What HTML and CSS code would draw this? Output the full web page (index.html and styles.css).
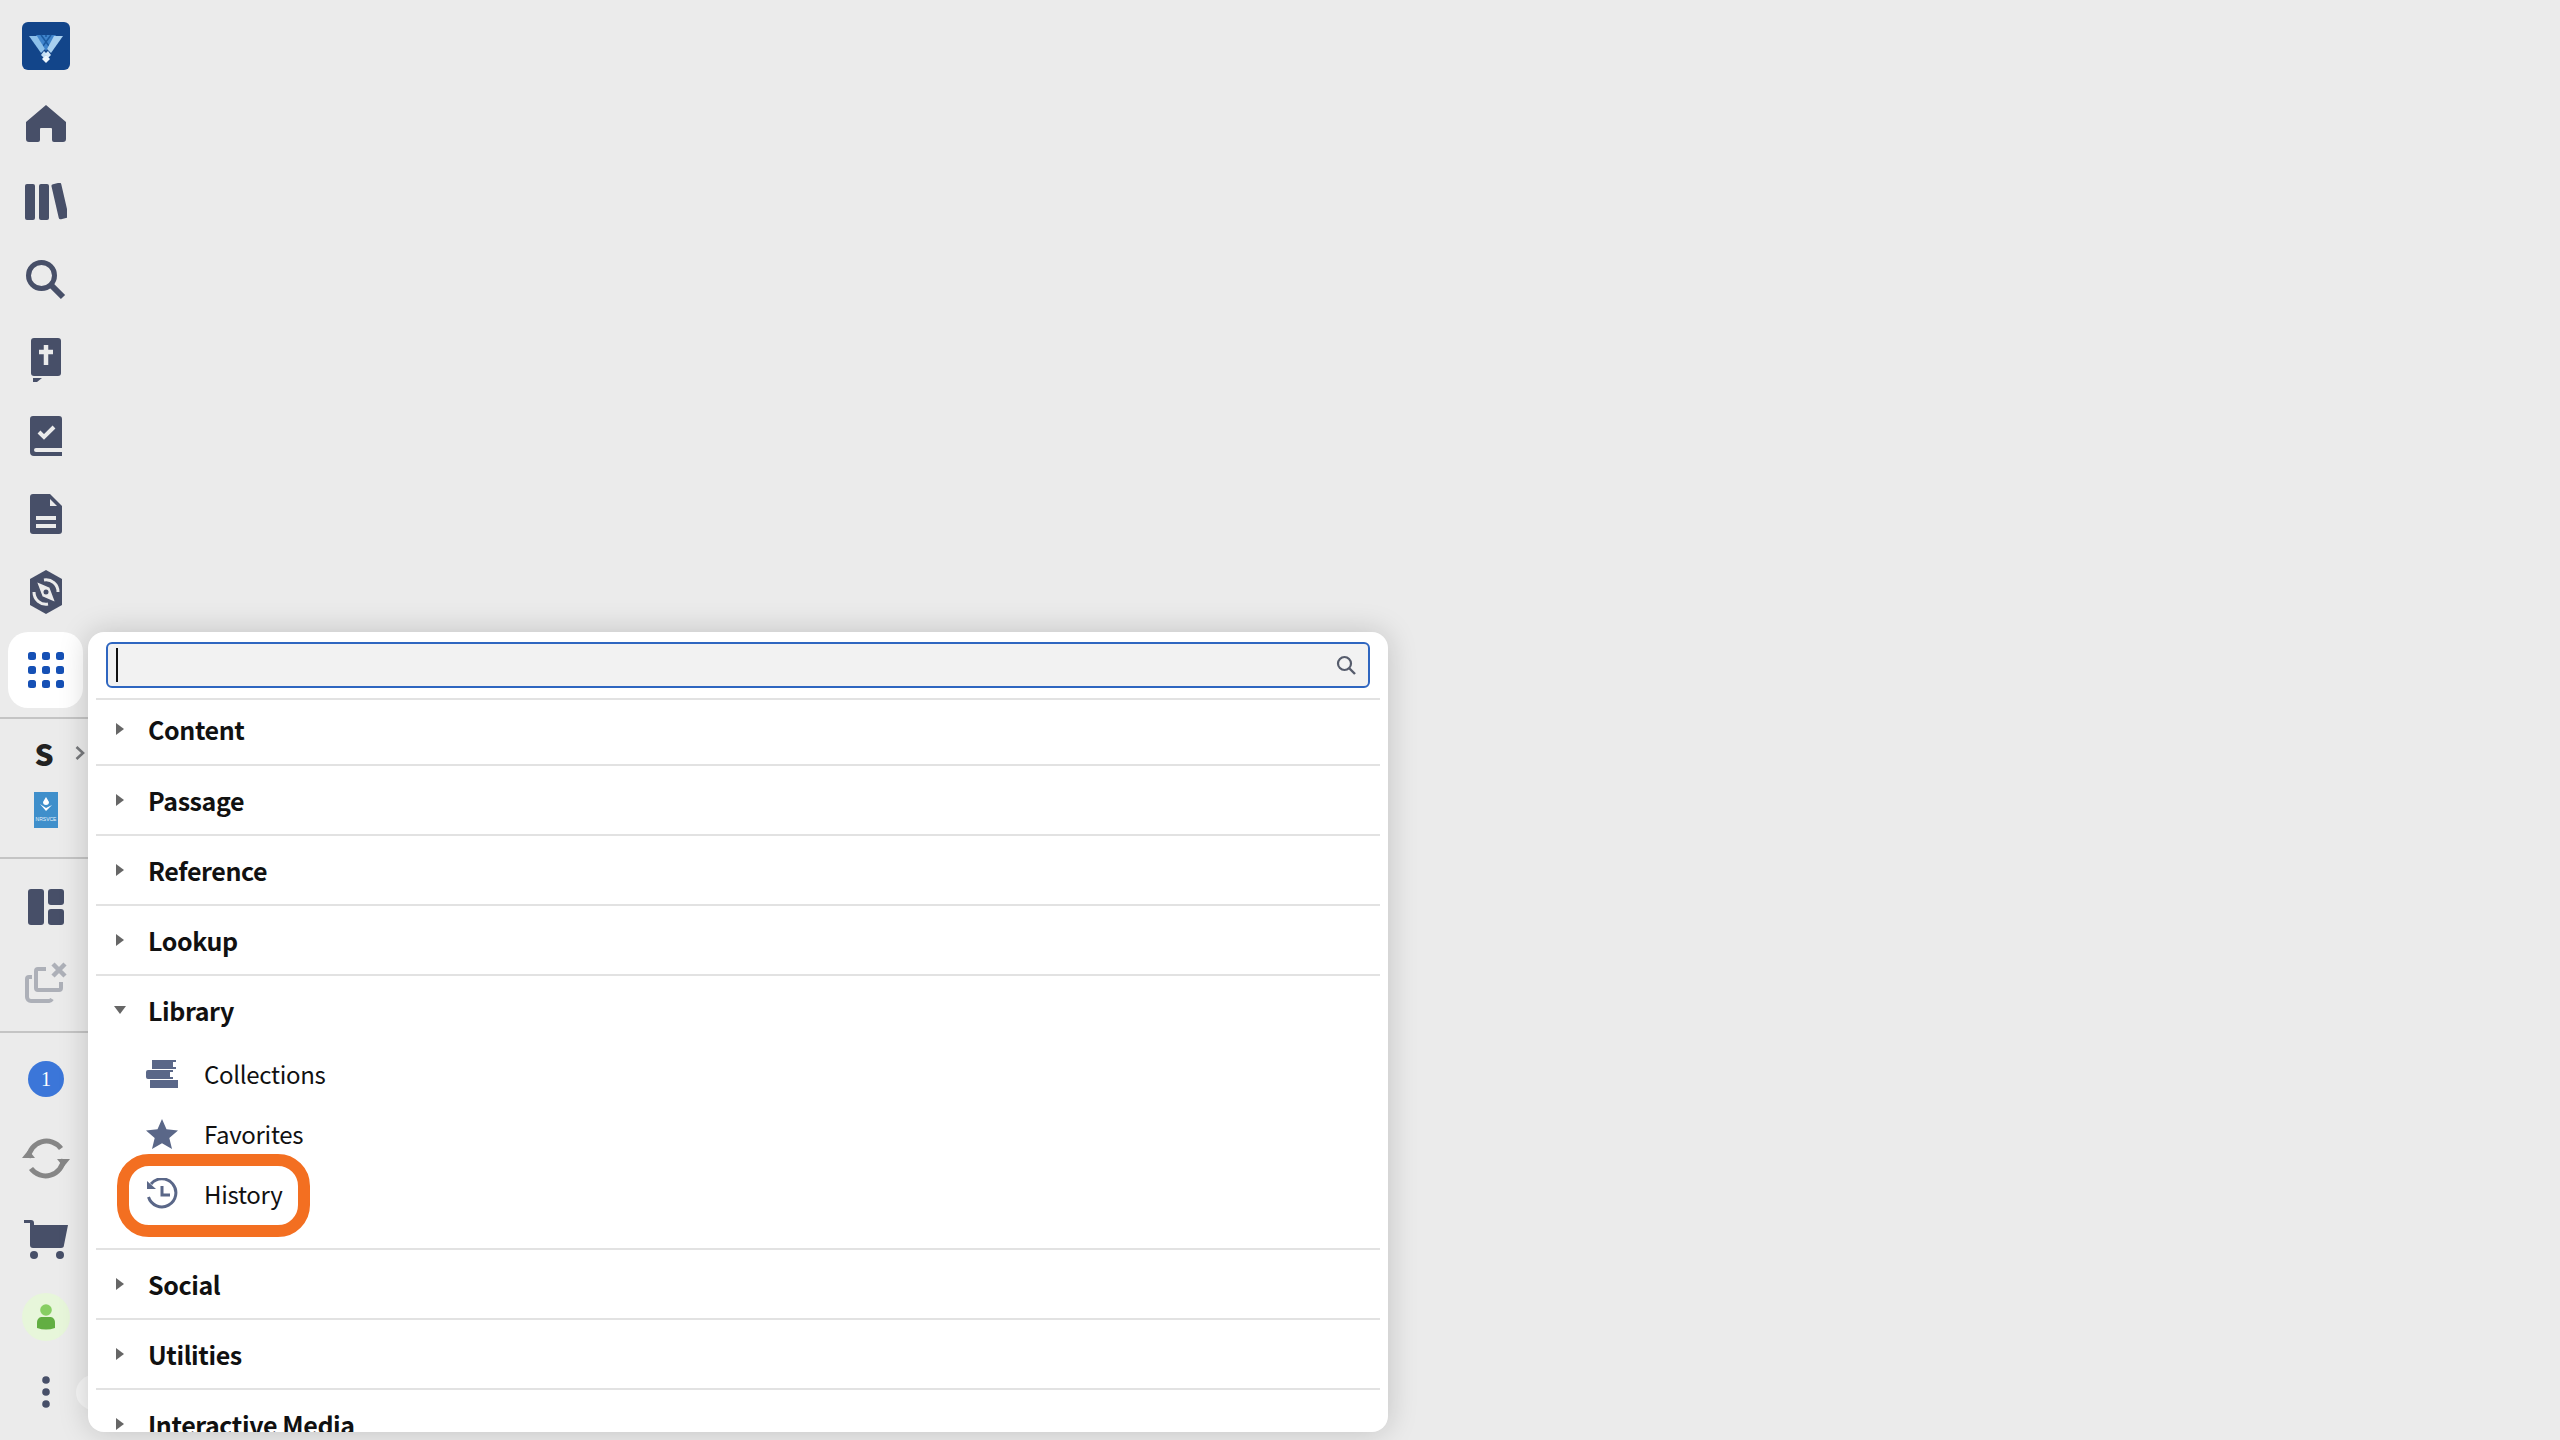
FILE: index.html
```html
<!DOCTYPE html>
<html lang="en">
<head>
<meta charset="utf-8">
<title>Tools</title>
<link rel="stylesheet" href="styles.css">
</head>
<body>
<aside class="sidebar">
  <div class="item"><svg class="ic" width="48" height="48" viewBox="0 0 48 48"><rect width="48" height="48" rx="6" fill="#12458a"/><polygon points="14,13 34,13 24,29" fill="#3f84cc"/><path d="M19 13 L27 24 M29 13 L21 24 M24 13 L24 15" stroke="#1c5aa0" stroke-width="1.500"/><polygon points="7,14 15,14 23,27 19,31" fill="#8cc0ea"/><polygon points="41,14 32,14 25,27 29,31" fill="#a8d0f0"/><polygon points="19,33 22,29 25,32 22,36" fill="#c3dff5"/><polygon points="29,33 26,29 23,32 26,36" fill="#d6e9f8"/><polygon points="24,33 28,37 24,41 20,37" fill="#edf6fc"/></svg></div>
  <div class="item"><svg width="40" height="38" viewBox="0 0 40 38"><path class="f" d="M20 0 L40 17 V34 a3 3 0 0 1-3 3 H28 a2 2 0 0 1-2-2 V24 a1 1 0 0 0-1-1 H15 a1 1 0 0 0-1 1 V35 a2 2 0 0 1-2 2 H3 a3 3 0 0 1-3-3 V17 Z"/></svg></div>
  <div class="item"><svg width="42" height="38" viewBox="0 0 42 38"><rect class="f" x="0" y="1" width="10" height="36" rx="2"/><rect class="f" x="14" y="1" width="10" height="36" rx="2"/><rect class="f" x="30" y="0" width="10" height="36" rx="2" transform="rotate(-13 35 18)"/></svg></div>
  <div class="item"><svg width="40" height="40" viewBox="0 0 40 40"><circle cx="15.500" cy="15.500" r="13" fill="none" stroke="#474f68" stroke-width="5"/><path d="M25 25 L37 37" stroke="#474f68" stroke-width="6"/></svg></div>
  <div class="item bible"><svg width="30" height="44" viewBox="0 0 30 44"><path class="f" d="M3 0 H27 a3 3 0 0 1 3 3 V35 a3 3 0 0 1-3 3 H3 a3 3 0 0 1-3-3 V3 a3 3 0 0 1 3-3Z"/><path class="f" d="M2 40 H11 L6 44 H2Z"/><path d="M15 7 V27 M8 14 H22" stroke="#ebebeb" stroke-width="4.500"/></svg></div>
  <div class="item"><svg width="32" height="40" viewBox="0 0 32 40"><path class="f" d="M3 0 H29 a3 3 0 0 1 3 3 V32 H6 a2 2 0 0 0 0 4 H32 V40 H4 a4 4 0 0 1-4-4 V3 a3 3 0 0 1 3-3Z"/><path d="M9 16 L14 21 L24 11" fill="none" stroke="#ebebeb" stroke-width="4"/></svg></div>
  <div class="item"><svg width="32" height="40" viewBox="0 0 32 40"><path class="f" d="M3 0 H20 L32 12 V37 a3 3 0 0 1-3 3 H3 a3 3 0 0 1-3-3 V3 a3 3 0 0 1 3-3Z"/><path d="M20 5 L27 12 H20Z" fill="#ebebeb"/><path d="M6 24 H26 M6 32 H26" stroke="#ebebeb" stroke-width="4"/></svg></div>
  <div class="item"><svg width="32" height="44" viewBox="0 0 32 44"><path class="f" d="M16 0 L32 9 V35 L16 44 L0 35 V9Z"/><path d="M14 10 A12 12 0 0 1 28 22 M4 22 A12 12 0 0 0 18 34" fill="none" stroke="#ebebeb" stroke-width="3"/><path d="M6 11 L20 17 L26 33 L12 27Z" fill="#ebebeb" stroke="#474f68" stroke-width="1.500"/><circle cx="16" cy="22" r="2.500" fill="#474f68"/></svg></div>
  <div class="item tile"><svg width="36" height="36" viewBox="0 0 36 36"><g class="blue"><rect width="8" height="8" rx="2.500"/><rect x="14" width="8" height="8" rx="2.500"/><rect x="28" width="8" height="8" rx="2.500"/><rect y="14" width="8" height="8" rx="2.500"/><rect x="14" y="14" width="8" height="8" rx="2.500"/><rect x="28" y="14" width="8" height="8" rx="2.500"/><rect y="28" width="8" height="8" rx="2.500"/><rect x="14" y="28" width="8" height="8" rx="2.500"/><rect x="28" y="28" width="8" height="8" rx="2.500"/></g></svg></div>
  <hr class="rule first">
  <div class="shortcut"><span class="s">S</span><svg class="chev" width="10" height="14" viewBox="0 0 10 14"><path d="M1.500 1 L8 7 L1.500 13" fill="none" stroke="#77797c" stroke-width="2.600"/></svg></div>
  <div class="book"><svg width="14" height="14" viewBox="0 0 14 14"><path d="M7 0 L10 5 a3 3 0 0 1-6 0Z M1 7 L7 11 L13 8 L7 14Z" fill="#fff"/></svg><span class="booklabel">NRSVCE</span></div>
  <hr class="rule second">
  <div class="item mid"><svg width="36" height="36" viewBox="0 0 36 36"><rect class="f" width="16" height="36" rx="3"/><rect class="f" x="20" width="16" height="16" rx="3"/><rect class="f" x="20" y="20" width="16" height="16" rx="3"/></svg></div>
  <div class="item stack"><svg width="42" height="42" viewBox="0 0 42 42"><g fill="none" stroke="#adb0b8" stroke-width="4"><path d="M21 7 H13 a2 2 0 0 0-2 2 V26 a2 2 0 0 0 2 2 H34 a2 2 0 0 0 2-2 V20"/><path d="M7 15 H4 a2 2 0 0 0-2 2 V35 a4 4 0 0 0 4 4 H24 a4 4 0 0 0 3-2"/><path d="M28 2 L40 14 M40 2 L28 14" stroke-width="4.500"/></g></svg></div>
  <hr class="rule third">
  <div class="item badgerow"><span class="badge">1</span></div>
  <div class="item sync"><svg width="48" height="42" viewBox="0 0 48 42"><g fill="none" stroke="#868686" stroke-width="5"><path d="M6.500 20 A18 18 0 0 1 39 10.500"/><path d="M41.500 21 A18 18 0 0 1 9 30.500"/></g><path d="M0 20 L6.500 12 L13 20Z M48 21 L41.500 29 L35 21Z" fill="#868686"/></svg></div>
  <div class="item cart"><svg width="44" height="40" viewBox="0 0 44 40"><path class="f" d="M0 1 H7 a3 3 0 0 1 3 3 V6 H44 L40 26 a3 3 0 0 1-3 3 H9 a3 3 0 0 1-3-3 V4 H0Z"/><circle class="f" cx="10" cy="36" r="4"/><circle class="f" cx="36" cy="36" r="4"/></svg></div>
  <div class="item prof"><span class="avatar"><svg width="18" height="26" viewBox="0 0 18 26"><circle cx="9" cy="6" r="5.800" fill="#87ce63"/><path d="M0 19 C0 14 3 13 5 13 H13 C15 13 18 14 18 19 V24 Q9 27 0 24Z" fill="#62ae42"/></svg></span></div>
  <div class="item more"><svg width="8" height="32" viewBox="0 0 8 32"><circle class="f" cx="4" cy="4" r="3.800"/><circle class="f" cx="4" cy="16" r="3.800"/><circle class="f" cx="4" cy="28" r="3.800"/></svg></div>
</aside>
<span class="tab"></span>
<section class="panel">
  <div class="searchwrap">
    <div class="search"><span class="caret"></span><svg width="20" height="20" viewBox="0 0 20 20"><circle cx="8.500" cy="8.500" r="6.500" fill="none" stroke="#565c6c" stroke-width="2.200"/><path d="M13 13 L19 19" stroke="#565c6c" stroke-width="2.400"/></svg></div>
  </div>
  <div class="group top"><svg class="tri" width="8" height="12" viewBox="0 0 8 12"><path d="M0 0 L8 6 L0 12Z"/></svg><span class="name">Content</span></div>
  <div class="group"><svg class="tri" width="8" height="12" viewBox="0 0 8 12"><path d="M0 0 L8 6 L0 12Z"/></svg><span class="name">Passage</span></div>
  <div class="group"><svg class="tri" width="8" height="12" viewBox="0 0 8 12"><path d="M0 0 L8 6 L0 12Z"/></svg><span class="name">Reference</span></div>
  <div class="group"><svg class="tri" width="8" height="12" viewBox="0 0 8 12"><path d="M0 0 L8 6 L0 12Z"/></svg><span class="name">Lookup</span></div>
  <div class="opened">
    <div class="group plain"><svg class="tri down" width="12" height="8" viewBox="0 0 12 8"><path d="M0 0 L12 0 L6 8Z"/></svg><span class="name">Library</span></div>
    <div class="tool first-tool"><svg class="ti" width="32" height="28" viewBox="0 0 32 28"><path class="g" d="M6 0 H30 V2 H27 V7 H30 V9 H6Z"/><path class="g" d="M2 10 H27 V12 H24 V17 H27 V19 H2 a2 2 0 0 1-2-2 V12 a2 2 0 0 1 2-2Z"/><path class="g" d="M4 20 H32 V28 H4Z"/></svg><span class="label">Collections</span></div>
    <div class="tool"><svg class="ti" width="32" height="30" viewBox="0 0 32 30"><path class="g" d="M16 0 L20.500 10.300 L32 11.500 L23.300 19 L26 30 L16 24.200 L6 30 L8.700 19 L0 11.500 L11.500 10.300Z"/></svg><span class="label">Favorites</span></div>
    <div class="tool hist"><svg class="ti" width="32" height="32" viewBox="0 0 32 32"><path d="M5 6 A14 14 0 1 1 2.500 19" fill="none" stroke="#5a6788" stroke-width="3"/><path class="g" d="M1 3 L10 11 H1Z"/><path d="M16 8 V17 H24" fill="none" stroke="#5a6788" stroke-width="3"/></svg><span class="label">History</span><span class="mark"></span></div>
  </div>
  <div class="group"><svg class="tri" width="8" height="12" viewBox="0 0 8 12"><path d="M0 0 L8 6 L0 12Z"/></svg><span class="name">Social</span></div>
  <div class="group"><svg class="tri" width="8" height="12" viewBox="0 0 8 12"><path d="M0 0 L8 6 L0 12Z"/></svg><span class="name">Utilities</span></div>
  <div class="group"><svg class="tri" width="8" height="12" viewBox="0 0 8 12"><path d="M0 0 L8 6 L0 12Z"/></svg><span class="name">Interactive Media</span></div>
</section>
</body>
</html>
```

FILE: styles.css
```css
* { box-sizing: border-box; }
html, body { margin: 0; height: 100%; }
body {
  background: #ebebeb;
  font-family: "Noto Sans CJK JP", "Noto Sans", sans-serif;
  color: #111;
  overflow: hidden;
  position: relative;
}
.f { fill: #474f68; }
.g { fill: #5a6788; }
.blue { fill: #1550b5; }
.sidebar {
  width: 88px;
  padding: 7px 0 0 4px;
  display: flex;
  flex-direction: column;
  align-items: stretch;
}
.item {
  height: 78px;
  flex: none;
  display: flex;
  align-items: center;
  justify-content: center;
}
.bible { padding-top: 4px; }
.tile {
  height: 76px;
  margin: 1px 5px 1px 4px;
  background: #fff;
  border-radius: 20px;
}
.rule {
  margin: 0 0 0 -4px;
  border: 0;
  height: 2px;
  background: #c4c4c4;
  flex: none;
}
.rule.first { margin-top: 8px; }
.shortcut {
  height: 36px;
  margin-top: 16px;
  position: relative;
  display: flex;
  align-items: center;
  justify-content: center;
}
.s { font-size: 30px; font-weight: 900; line-height: 36px; color: #222; margin-left: -4px; }
.chev { position: absolute; left: 71px; top: 11px; }
.book {
  width: 24px;
  height: 36px;
  margin: 21px 0 0 30px;
  background: #3f8fcb;
  display: flex;
  flex-direction: column;
  align-items: center;
  padding-top: 5px;
  overflow: hidden;
  flex: none;
}
.booklabel { font-size: 5px; line-height: 8px; color: #e8f3fb; margin-top: 4px; white-space: nowrap; font-family: "Liberation Sans", sans-serif; }
.rule.second { margin-top: 29px; }
.mid { margin-top: 9px; }
.stack { height: 74px; }
.rule.third { margin-top: 11px; }
.badgerow { margin-top: 7px; }
.badge {
  width: 36px;
  height: 36px;
  border-radius: 50%;
  background: #3b76d9;
  color: #fff;
  font-size: 20px;
  font-family: "Liberation Serif", serif;
  display: flex;
  align-items: center;
  justify-content: center;
}
.sync { height: 82px; }
.avatar {
  width: 48px;
  height: 48px;
  border-radius: 50%;
  background: #e7f6da;
  display: flex;
  align-items: center;
  justify-content: center;
}
.more { height: 72px; }
.tab {
  position: absolute;
  left: 76px;
  top: 1375px;
  width: 36px;
  height: 35px;
  border-radius: 50%;
  background: #f6f6f6;
}
.panel {
  position: absolute;
  left: 88px;
  top: 632px;
  width: 1300px;
  height: 800px;
  background: #fff;
  border-radius: 16px;
  box-shadow: 0 0 30px rgba(0, 0, 0, .18);
  padding: 0 8px;
  overflow: hidden;
}
.searchwrap { padding: 10px; height: 68px; border-bottom: 2px solid #e2e2e2; }
.search {
  height: 46px;
  background: #f2f2f2;
  border: 2px solid #2f66c0;
  border-radius: 6px;
  display: flex;
  align-items: center;
  justify-content: space-between;
  padding: 0 12px 0 8px;
}
.caret { width: 2px; height: 34px; background: #111; }
.group {
  height: 70px;
  border-bottom: 2px solid #e2e2e2;
  display: flex;
  align-items: center;
  padding-left: 20px;
}
.group.top { height: 66px; padding-bottom: 6px; }
.group.plain { border: 0; padding-bottom: 2px; }
.opened { border-bottom: 2px solid #e2e2e2; height: 274px; }
.tri { fill: #666; flex: none; }
.tri.down { margin-left: -2px; margin-right: -2px; }
.name { font-size: 25px; letter-spacing: -.4px; font-weight: 700; margin-left: 24px; line-height: 1; color: #111; }
.tool {
  height: 60px;
  display: flex;
  align-items: center;
  padding-left: 50px;
  position: relative;
}
.first-tool { margin-top: -2px; }
.ti { flex: none; }
.label { font-size: 24px; letter-spacing: -.3px; margin-left: 26px; line-height: 1; color: #111; }
.mark {
  position: absolute;
  left: 21px;
  top: -10px;
  width: 193px;
  height: 83px;
  border: 12px solid #f36f21;
  border-radius: 32px;
}
```
